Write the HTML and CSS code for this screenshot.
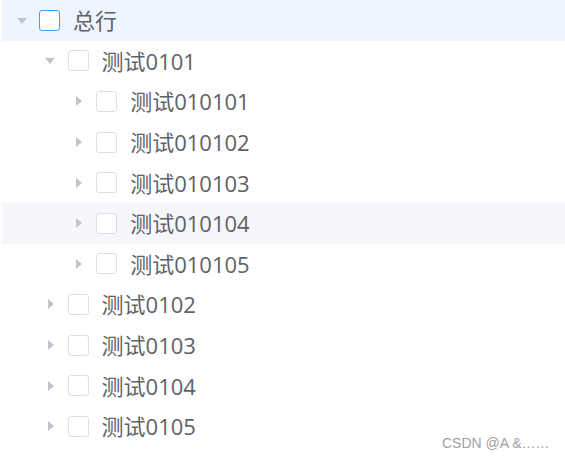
FILE: index.html
```html
<!DOCTYPE html>
<html>
<head>
<meta charset="utf-8">
<link rel="stylesheet" href="styles.css">
</head>
<body>
<div class="tree">
  <div class="node current" style="--lvl:0"><span class="arrow open"></span><span class="cb hover"></span><span class="label">总行</span></div>
  <div class="node" style="--lvl:1"><span class="arrow open"></span><span class="cb"></span><span class="label">测试0101</span></div>
  <div class="node" style="--lvl:2"><span class="arrow"></span><span class="cb"></span><span class="label">测试010101</span></div>
  <div class="node" style="--lvl:2"><span class="arrow"></span><span class="cb"></span><span class="label">测试010102</span></div>
  <div class="node" style="--lvl:2"><span class="arrow"></span><span class="cb"></span><span class="label">测试010103</span></div>
  <div class="node hovered" style="--lvl:2"><span class="arrow"></span><span class="cb"></span><span class="label">测试010104</span></div>
  <div class="node" style="--lvl:2"><span class="arrow"></span><span class="cb"></span><span class="label">测试010105</span></div>
  <div class="node" style="--lvl:1"><span class="arrow"></span><span class="cb"></span><span class="label">测试0102</span></div>
  <div class="node" style="--lvl:1"><span class="arrow"></span><span class="cb"></span><span class="label">测试0103</span></div>
  <div class="node" style="--lvl:1"><span class="arrow"></span><span class="cb"></span><span class="label">测试0104</span></div>
  <div class="node" style="--lvl:1"><span class="arrow"></span><span class="cb"></span><span class="label">测试0105</span></div>
</div>
<div class="watermark">CSDN @A &amp;……</div>
</body>
</html>
```
FILE: styles.css
```css
html, body {
  margin: 0;
  padding: 0;
  background: #fff;
}
body {
  font-family: "Open Sans", "Noto Sans CJK SC", sans-serif;
  color: #606266;
  position: relative;
  width: 565px;
  height: 460px;
  overflow: hidden;
}
.tree {
  margin-left: 2px;
  display: flex;
  flex-direction: column;
}
.node {
  height: 40.6px;
  display: flex;
  align-items: center;
  padding-left: calc(var(--lvl) * 28.6px + 9px);
}
.node.current {
  background: #eef5fe;
}
.node.hovered {
  background: #f5f7fa;
}
.arrow {
  width: 21px;
  height: 21px;
  display: flex;
  align-items: center;
  justify-content: center;
  flex: none;
}
.arrow::before {
  content: "";
  width: 0;
  height: 0;
  border-top: 5px solid transparent;
  border-bottom: 5px solid transparent;
  border-left: 6px solid #c0c4cc;
  margin-left: 1px;
}
.arrow.open::before {
  border-left: 5px solid transparent;
  border-right: 5px solid transparent;
  border-top: 6px solid #c0c4cc;
  border-bottom: 0;
  margin-left: 0;
  margin-top: 1px;
}
.cb {
  width: 19px;
  height: 19px;
  border: 1px solid #dcdfe6;
  border-radius: 3px;
  background: #fff;
  margin-left: 7px;
  flex: none;
  box-sizing: content-box;
}
.cb.hover {
  border-color: #409eff;
}
.label {
  margin-left: 13px;
  font-size: 22px;
  line-height: 1;
  white-space: nowrap;
}
.watermark {
  position: absolute;
  left: 442px;
  top: 435px;
  font-family: "Liberation Sans", Arial, sans-serif;
  font-size: 14px;
  color: #a0a0a0;
  white-space: nowrap;
}
```
